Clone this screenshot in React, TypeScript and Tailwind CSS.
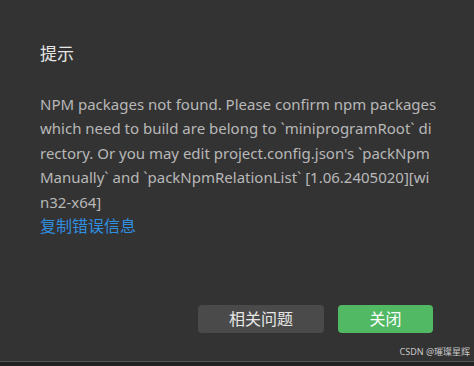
import React from "react";

export default function App() {
  const lines = [
    "NPM packages not found. Please confirm npm packages",
    "which need to build are belong to `miniprogramRoot` di",
    "rectory. Or you may edit project.config.json's `packNpm",
    "Manually` and `packNpmRelationList` [1.06.2405020][wi",
    "n32-x64]",
  ];
  return (
    <div
      className="relative w-[474px] h-[366px] bg-[#333333] flex flex-col overflow-hidden"
      style={{ fontFamily: '"Segoe UI", "Noto Sans", "Noto Sans CJK SC", sans-serif' }}
    >
      <div className="flex-1 flex flex-col pl-[40px] pr-[30px]">
        <div className="pt-[42px] text-[17px] leading-[24px] text-[#e6e6e6]">提示</div>
        <div className="mt-[26px] text-[15px] leading-[24.4px] text-[#b8b8b8] whitespace-nowrap">
          {lines.map((l, i) => (
            <div key={i}>{l}</div>
          ))}
          <div className="text-[16px] text-[#2f8fe0] cursor-pointer">复制错误信息</div>
        </div>
        <div className="flex-1" />
        <div className="flex justify-end gap-[14px] pr-[11px] pb-[28px]">
          <button className="w-[126px] h-[28px] rounded-[4px] bg-[#4a4a4a] text-[16px] text-[#e6e6e6]">
            相关问题
          </button>
          <button className="w-[95px] h-[28px] rounded-[4px] bg-[#51b863] text-[16px] text-white">
            关闭
          </button>
        </div>
      </div>
      <div className="h-[1px] bg-[#555555]" />
      <div className="h-[4px] bg-[#222222]" />
      <span className="absolute right-[4px] bottom-[8px] text-[9px] leading-[12px] text-[#c8c8c8]">
        CSDN @璀璨星辉
      </span>
    </div>
  );
}
